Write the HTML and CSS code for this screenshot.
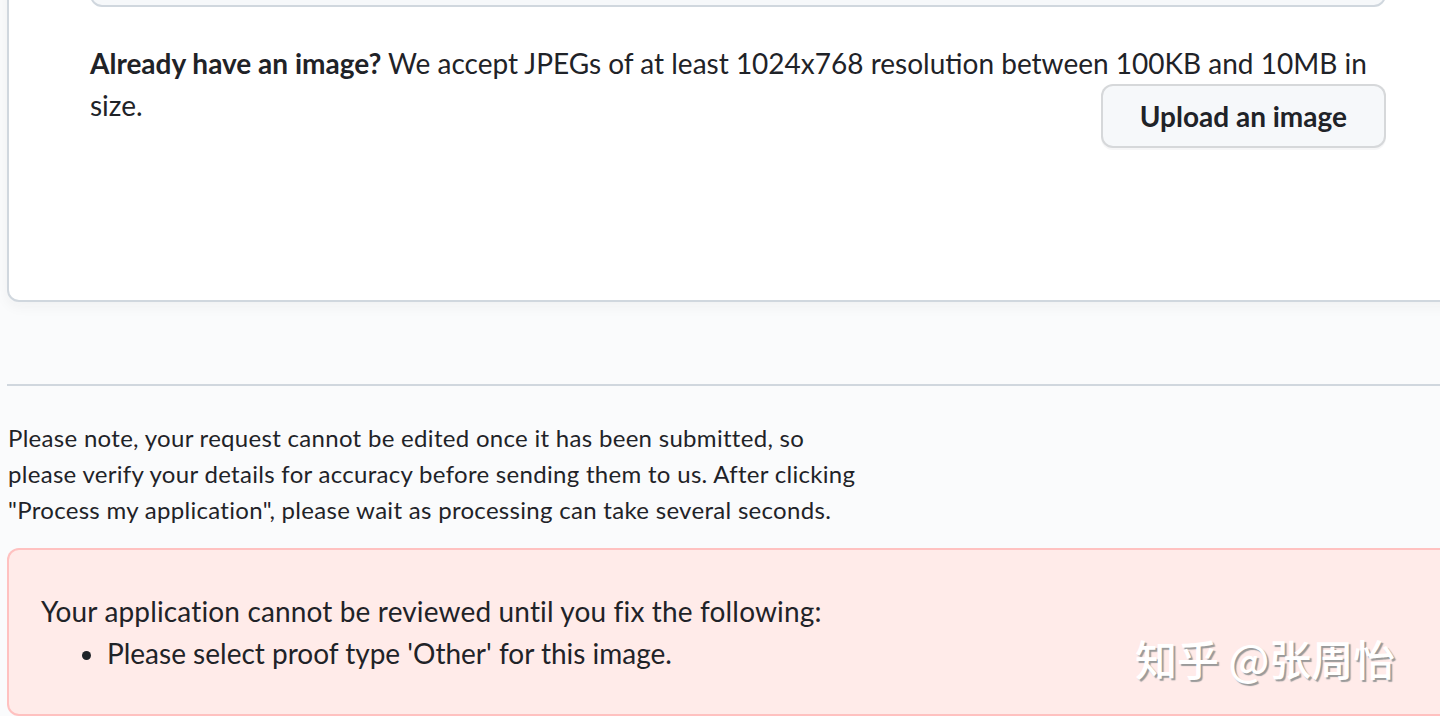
FILE: index.html
```html
<!DOCTYPE html>
<html lang="en">
<head>
<meta charset="utf-8">
<title>Upload proof</title>
<link rel="stylesheet" href="styles.css">
</head>
<body>
<div class="page">
  <div class="card">
    <div class="capture-box"></div>
    <p class="upload-text"><strong>Already have an image?</strong> We accept JPEGs of at least 1024x768 resolution between 100KB and 10MB in size.<button class="btn" type="button">Upload an image</button></p>
  </div>
  <hr class="divider">
  <p class="note">Please note, your request cannot be edited once it has been submitted, so please verify your details for accuracy before sending them to us. After clicking "Process my application", please wait as processing can take several seconds.</p>
  <div class="flash-error">
    <div class="flash-title">Your application cannot be reviewed until you fix the following:</div>
    <ul class="flash-list">
      <li>Please select proof type 'Other' for this image.</li>
    </ul>
  </div>
</div>
<div class="watermark">知乎 @张周怡</div>
</body>
</html>
```
FILE: styles.css
```css
html, body {
  margin: 0;
  padding: 0;
}
body {
  background: #fafbfc;
  color: #1f2328;
  font-family: Lato, "Noto Sans", "Liberation Sans", sans-serif;
  width: 1440px;
  height: 716px;
  overflow: hidden;
  position: relative;
}
.page {
  margin-top: -100px;
  width: 1520px;
}
.card {
  margin-left: 7px;
  background: #ffffff;
  border: 2px solid #d0d7de;
  border-radius: 12px;
  padding: 40px 0 152px 81px;
  box-shadow: 0 4px 14px rgba(31, 35, 40, 0.05);
}
.capture-box {
  width: 1292px;
  height: 61px;
  background: #f6f8fa;
  border: 2px solid #d0d7de;
  border-radius: 12px;
}
.upload-text {
  display: flow-root;
  width: 1296px;
  margin: 35px 0 0;
  font-size: 28px;
  line-height: 42px;
}
.upload-text strong {
  font-weight: 700;
}
.btn {
  float: right;
  font-family: inherit;
  font-size: 28px;
  font-weight: 700;
  line-height: 40px;
  padding: 10px 37px;
  color: #1f2328;
  background: #f6f8fa;
  border: 2px solid rgba(31, 35, 40, 0.15);
  border-radius: 12px;
  box-shadow: 0 2px 0 rgba(31, 35, 40, 0.04);
}
.divider {
  margin: 82px 0 0 7px;
  border: 0;
  border-top: 2px solid #d0d7de;
  height: 0;
}
.note {
  margin: 34px 0 0 8px;
  max-width: 856px;
  font-size: 24px;
  line-height: 36px;
  letter-spacing: 0.3px;
}
.flash-error {
  margin: 20px 0 0 7px;
  background: #ffebe9;
  border: 2px solid rgba(255, 129, 130, 0.4);
  border-radius: 12px;
  padding: 40px 32px;
  font-size: 28px;
  line-height: 42px;
}
.flash-title {
  letter-spacing: 0.15px;
}
.flash-list {
  margin: 0;
  padding-left: 66px;
}
.watermark {
  position: absolute;
  left: 1135px;
  top: 630px;
  font-family: "Noto Sans CJK SC", sans-serif;
  font-size: 42px;
  font-weight: 500;
  line-height: 56px;
  color: #ffffff;
  text-shadow: 2px 2px 1px #9a9a9a;
  white-space: nowrap;
}
```
